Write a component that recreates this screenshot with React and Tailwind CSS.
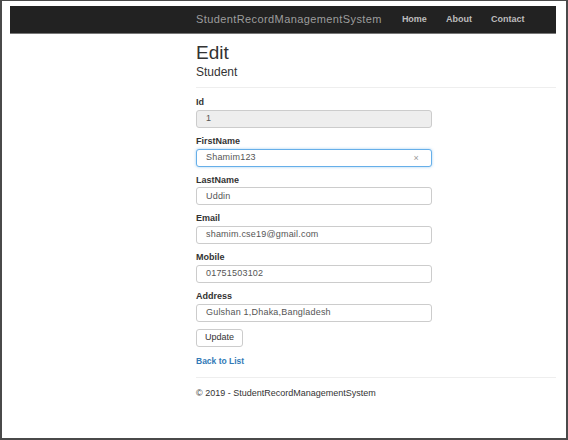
import React from 'react';

const fields = [
  { label: 'Id', value: '1', disabled: true },
  { label: 'FirstName', value: 'Shamim123', focused: true },
  { label: 'LastName', value: 'Uddin' },
  { label: 'Email', value: 'shamim.cse19@gmail.com' },
  { label: 'Mobile', value: '01751503102' },
  { label: 'Address', value: 'Gulshan 1,Dhaka,Bangladesh' },
];

function Field({ label, value, disabled, focused }) {
  let box = 'border-[#cccccc] bg-white';
  if (disabled) box = 'border-[#cccccc] bg-[#eeeeee]';
  if (focused) box = 'border-[#66afe9] bg-white shadow-[0_0_3px_rgba(102,175,233,0.6)]';
  return (
    <div className="mb-[7px]">
      <label className="block text-[9px] leading-[12px] font-bold text-[#333] mb-[1.8px]">{label}</label>
      <div className={`relative flex items-center w-[236px] h-[18px] border rounded-[3px] pl-[9px] text-[9px] text-[#555] tracking-[0.2px] ${box}`}>
        <span>{value}</span>
        {focused && <span className="absolute right-[12px] top-[3px] text-[9px] leading-[10px] text-[#999]">×</span>}
      </div>
    </div>
  );
}

export default function App() {
  return (
    <div className="w-[568px] h-[440px] bg-white border-l-2 border-r-2 border-b-2 border-t border-[#4a4a4a] pl-[8px] pt-[5px] font-['Liberation_Sans',Arial,sans-serif] text-[#333] overflow-hidden">
      {/* navbar */}
      <nav className="w-[546px] h-[28px] bg-[#222222] border-b border-[#777] flex items-center">
        <div className="pl-[186px] flex items-center">
          <span className="text-[11px] tracking-[0.4px] text-[#9d9d9d] mr-[10px]">StudentRecordManagementSystem</span>
          <a className="px-[10px] text-[9px] font-bold text-[#bdbdbd]">Home</a>
          <a className="px-[9px] text-[9px] font-bold text-[#bdbdbd]">About</a>
          <a className="px-[10px] text-[9px] font-bold text-[#bdbdbd]">Contact</a>
        </div>
      </nav>

      <div className="ml-[186px] w-[360px]">
        <h2 className="mt-[8px] text-[19px] leading-[21px] text-[#333]">Edit</h2>
        <h4 className="mt-[2px] text-[12px] leading-[14px] text-[#333]">Student</h4>
        <hr className="mt-[8px] mb-[8px] border-t border-[#eeeeee]" />

        <form>
          {fields.map((f) => (
            <Field key={f.label} {...f} />
          ))}
          <button
            type="button"
            className="block mt-[1px] h-[18px] px-[8px] border border-[#cccccc] rounded-[3px] bg-white text-[9px] text-[#333]"
          >
            Update
          </button>
        </form>

        <div className="mt-[6px] leading-[12px]">
          <a className="text-[8.5px] font-bold text-[#337ab7]">Back to List</a>
        </div>
        <hr className="mt-[10px] border-t border-[#eeeeee]" />
        <footer className="mt-[9px] text-[9px] leading-[12px] text-[#333]">
          © 2019 - StudentRecordManagementSystem
        </footer>
      </div>
    </div>
  );
}
